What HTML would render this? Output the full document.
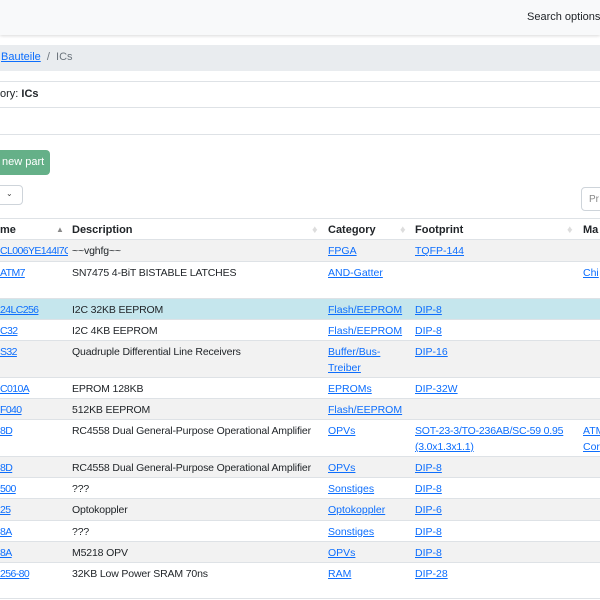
<!DOCTYPE html><html><head><style>
*{margin:0;padding:0;box-sizing:border-box}
body{width:600px;height:600px;overflow:hidden;background:#fff;font-family:"Liberation Sans",sans-serif;font-size:11px;color:#212529;position:relative}
.a{position:absolute;white-space:nowrap}
a{color:#0d6efd;text-decoration:underline}
.r{position:absolute;left:0;width:600px;border-top:1px solid #dee2e6;font-size:10.5px}
.r span{position:absolute;top:3px;line-height:16px;white-space:nowrap}
.r span.n{left:0;width:68px;overflow:hidden;letter-spacing:-0.6px}
.r span.d{left:72px;letter-spacing:-0.15px}
.g{background:#f2f2f2}.c{background:#c5e6ed}
</style></head><body>
<div class="a" style="left:0;top:0;width:600px;height:35px;background:#f8f9fa;box-shadow:0 1px 3px rgba(0,0,0,.15)"></div>
<div class="a" style="left:527px;top:11px;font-size:11px">Search options</div>
<div class="a" style="left:0;top:45px;width:600px;height:26px;background:#e9ecef"></div>
<div class="a" style="left:1px;top:51px;font-size:11px"><a>Bauteile</a> <span style="color:#6c757d">&nbsp;/&nbsp; ICs</span></div>
<div class="a" style="left:0;top:81px;width:600px;height:54px;border-top:1px solid #dee2e6;border-bottom:1px solid #dee2e6"></div>
<div class="a" style="left:0;top:107px;width:600px;border-top:1px solid #dee2e6"></div>
<div class="a" style="left:0;top:88px;font-size:11px">ory: <b>ICs</b></div>
<div class="a" style="left:-6px;top:150px;width:56px;height:25px;background:#65b088;border-radius:4px;color:#fff;font-size:11px;padding:6px 0 0 8px">new part</div>
<div class="a" style="left:-6px;top:185px;width:29px;height:20px;border:1px solid #ced4da;border-radius:4px;font-size:8px;padding:3px 0 0 11px;color:#444">&#8964;</div>
<div class="a" style="left:581px;top:187px;width:30px;height:24px;border:1px solid #ced4da;border-radius:4px;font-size:10px;color:#888;padding:6px 0 0 7px">Pr</div>
<div class="r" style="top:218px;height:22px;font-weight:bold;border-bottom:1px solid #bbb;font-size:11px"><span style="left:0">me</span><span style="left:56px;color:#888;font-size:8px;font-weight:normal">▲</span><span style="left:72px">Description</span><span style="left:312px;color:#ddd">♦</span><span style="left:328px">Category</span><span style="left:400px;color:#ddd">♦</span><span style="left:415px">Footprint</span><span style="left:567px;color:#ddd">♦</span><span style="left:583px">Ma</span></div>
<div class="r g" style="top:239px;height:22px"><span class="n"><a>CL006YE144I7G</a></span><span class="d">~~vghfg~~</span><span style="left:328px"><a>FPGA</a></span><span style="left:415px"><a>TQFP-144</a></span></div>
<div class="r" style="top:261px;height:37px"><span class="n"><a>ATM7</a></span><span class="d">SN7475 4-BiT BISTABLE LATCHES</span><span style="left:328px"><a>AND-Gatter</a></span><span style="left:583px"><a>Chi</a></span></div>
<div class="r c" style="top:298px;height:21px"><span class="n"><a>24LC256</a></span><span class="d">I2C 32KB EEPROM</span><span style="left:328px"><a>Flash/EEPROM</a></span><span style="left:415px"><a>DIP-8</a></span></div>
<div class="r" style="top:319px;height:21px"><span class="n"><a>C32</a></span><span class="d">I2C 4KB EEPROM</span><span style="left:328px"><a>Flash/EEPROM</a></span><span style="left:415px"><a>DIP-8</a></span></div>
<div class="r g" style="top:340px;height:37px"><span class="n"><a>S32</a></span><span class="d">Quadruple Differential Line Receivers</span><span style="left:328px"><a>Buffer/Bus-</a><br><a>Treiber</a></span><span style="left:415px"><a>DIP-16</a></span></div>
<div class="r" style="top:377px;height:21px"><span class="n"><a>C010A</a></span><span class="d">EPROM 128KB</span><span style="left:328px"><a>EPROMs</a></span><span style="left:415px"><a>DIP-32W</a></span></div>
<div class="r g" style="top:398px;height:21px"><span class="n"><a>F040</a></span><span class="d">512KB EEPROM</span><span style="left:328px"><a>Flash/EEPROM</a></span></div>
<div class="r" style="top:419px;height:37px"><span class="n"><a>8D</a></span><span class="d">RC4558 Dual General-Purpose Operational Amplifier</span><span style="left:328px"><a>OPVs</a></span><span style="left:415px;letter-spacing:-0.2px"><a>SOT-23-3/TO-236AB/SC-59 0.95</a><br><a>(3.0x1.3x1.1)</a></span><span style="left:583px"><a>ATM</a><br><a>Cor</a></span></div>
<div class="r g" style="top:456px;height:21px"><span class="n"><a>8D</a></span><span class="d">RC4558 Dual General-Purpose Operational Amplifier</span><span style="left:328px"><a>OPVs</a></span><span style="left:415px"><a>DIP-8</a></span></div>
<div class="r" style="top:477px;height:21px"><span class="n"><a>500</a></span><span class="d">???</span><span style="left:328px"><a>Sonstiges</a></span><span style="left:415px"><a>DIP-8</a></span></div>
<div class="r g" style="top:498px;height:22px"><span class="n"><a>25</a></span><span class="d">Optokoppler</span><span style="left:328px"><a>Optokoppler</a></span><span style="left:415px"><a>DIP-6</a></span></div>
<div class="r" style="top:520px;height:21px"><span class="n"><a>8A</a></span><span class="d">???</span><span style="left:328px"><a>Sonstiges</a></span><span style="left:415px"><a>DIP-8</a></span></div>
<div class="r g" style="top:541px;height:21px"><span class="n"><a>8A</a></span><span class="d">M5218 OPV</span><span style="left:328px"><a>OPVs</a></span><span style="left:415px"><a>DIP-8</a></span></div>
<div class="r" style="top:562px;height:37px;border-bottom:1px solid #dee2e6"><span class="n"><a>256-80</a></span><span class="d">32KB Low Power SRAM 70ns</span><span style="left:328px"><a>RAM</a></span><span style="left:415px"><a>DIP-28</a></span></div>
</body></html>
